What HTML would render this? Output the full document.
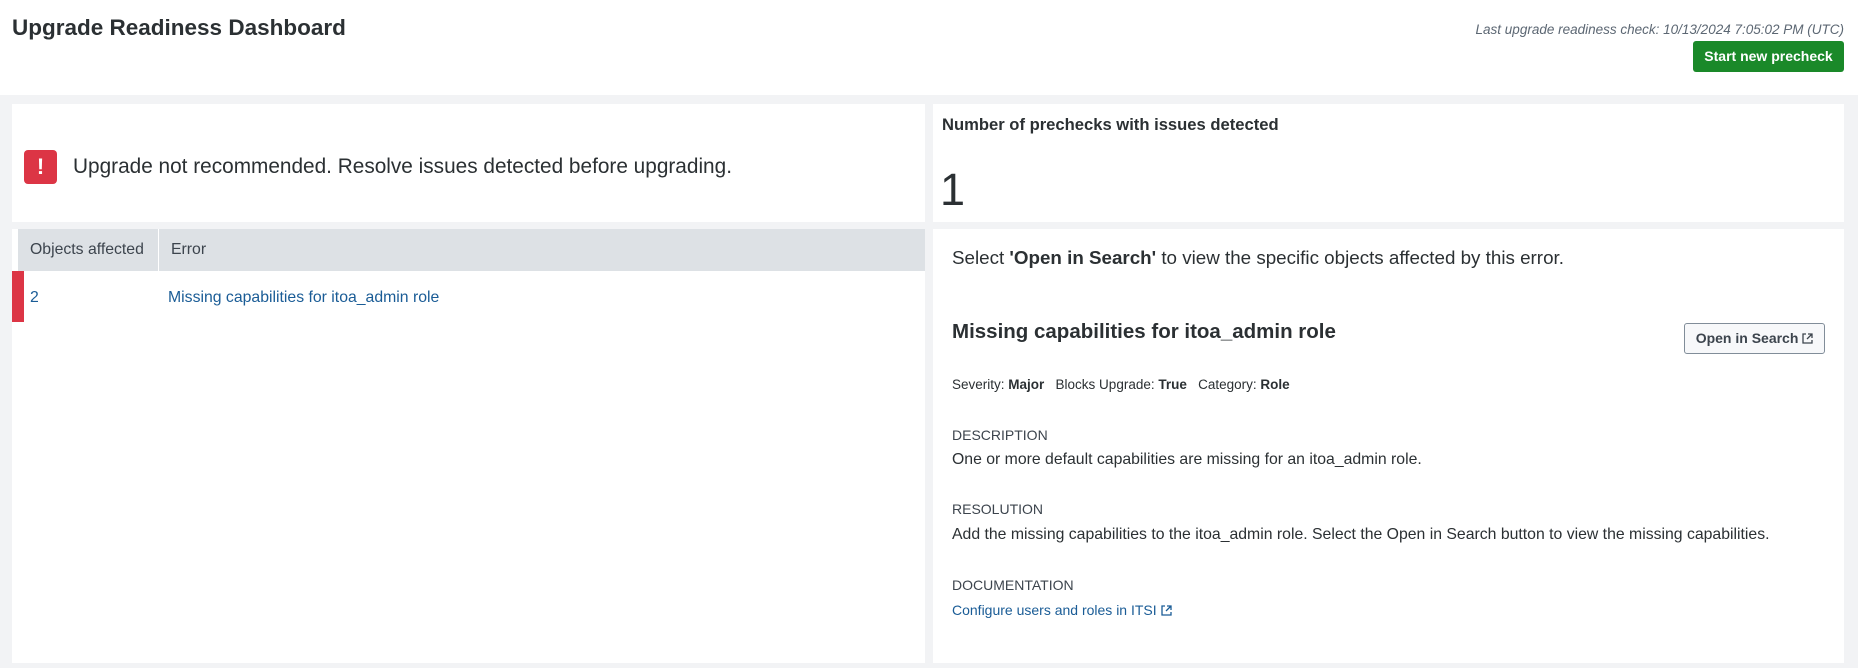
<!DOCTYPE html>
<html><head><meta charset="utf-8"><style>
*{margin:0;padding:0;box-sizing:border-box}
body{width:1858px;height:668px;background:#f2f3f5;font-family:"Liberation Sans",sans-serif;color:#2b3033;position:relative;overflow:hidden}
.a{position:absolute;white-space:nowrap}
.p{position:absolute;background:#fff}
.link{color:#1a5c96}
.cap{font-size:14px;color:#3c444d}
</style></head><body>
<div class="p" style="left:0;top:0;width:1858px;height:95px"></div>
<div class="a" style="left:12px;top:15px;font-size:22.5px;font-weight:bold">Upgrade Readiness Dashboard</div>
<div class="a" style="right:14px;top:22px;font-size:13.5px;font-style:italic;color:#5c6773">Last upgrade readiness check: 10/13/2024 7:05:02 PM (UTC)</div>
<div class="a" style="left:1693px;top:41px;width:151px;height:31px;background:#1a8929;border-radius:3px;color:#fff;font-weight:bold;font-size:14px;line-height:31px;text-align:center">Start new precheck</div>

<div class="p" style="left:12px;top:104px;width:913px;height:118px"></div>
<div class="a" style="left:24px;top:150px;width:33px;height:34px;background:#dc3545;border-radius:4px;color:#fff;font-weight:bold;font-size:22px;line-height:34px;text-align:center">!</div>
<div class="a" style="left:73px;top:155px;font-size:20.8px">Upgrade not recommended. Resolve issues detected before upgrading.</div>

<div class="p" style="left:933px;top:104px;width:911px;height:118px"></div>
<div class="a" style="left:942px;top:115px;font-size:16.6px;font-weight:bold">Number of prechecks with issues detected</div>
<div class="a" style="left:940px;top:163px;font-size:45px;line-height:54px">1</div>

<div class="p" style="left:12px;top:229px;width:913px;height:434px"></div>
<div class="a" style="left:18px;top:229px;width:907px;height:42px;background:#dde1e5"></div>
<div class="a" style="left:158px;top:229px;width:1px;height:42px;background:#fff"></div>
<div class="a" style="left:30px;top:241px;font-size:15.8px;color:#3c444d">Objects affected</div>
<div class="a" style="left:171px;top:241px;font-size:15.8px;color:#3c444d">Error</div>
<div class="a" style="left:12px;top:271px;width:12px;height:51px;background:#dc3545"></div>
<div class="a link" style="left:30px;top:289px;font-size:15.8px">2</div>
<div class="a link" style="left:168px;top:289px;font-size:15.8px">Missing capabilities for itoa_admin role</div>

<div class="p" style="left:933px;top:229px;width:911px;height:434px"></div>
<div class="a" style="left:952px;top:247px;font-size:18.8px">Select <b>'Open in Search'</b> to view the specific objects affected by this error.</div>
<div class="a" style="left:952px;top:320px;font-size:20.5px;font-weight:bold">Missing capabilities for itoa_admin role</div>
<div class="a" style="left:1684px;top:323px;width:141px;height:31px;border:1px solid #818d99;border-radius:3px;background:#f7f8fa;font-size:14px;line-height:29px;text-align:center;font-weight:bold;color:#3c444d">Open in Search <svg width="11" height="11" viewBox="0 0 11 11" style="vertical-align:-1px"><path d="M4 1H1v9h9V7M6 1h4v4M10 1L5 6" fill="none" stroke="#3c444d" stroke-width="1.3"/></svg></div>
<div class="a" style="left:952px;top:377px;font-size:13.5px">Severity: <b>Major</b>&nbsp;&nbsp; Blocks Upgrade: <b>True</b>&nbsp;&nbsp; Category: <b>Role</b></div>
<div class="a cap" style="left:952px;top:427px">DESCRIPTION</div>
<div class="a" style="left:952px;top:451px;font-size:15.8px">One or more default capabilities are missing for an itoa_admin role.</div>
<div class="a cap" style="left:952px;top:501px">RESOLUTION</div>
<div class="a" style="left:952px;top:526px;font-size:15.8px">Add the missing capabilities to the itoa_admin role. Select the Open in Search button to view the missing capabilities.</div>
<div class="a cap" style="left:952px;top:577px">DOCUMENTATION</div>
<div class="a link" style="left:952px;top:602px;font-size:14px">Configure users and roles in ITSI <svg width="11" height="11" viewBox="0 0 11 11" style="vertical-align:-1px"><path d="M4 1H1v9h9V7M6 1h4v4M10 1L5 6" fill="none" stroke="#1a5c96" stroke-width="1.3"/></svg></div>
</body></html>
